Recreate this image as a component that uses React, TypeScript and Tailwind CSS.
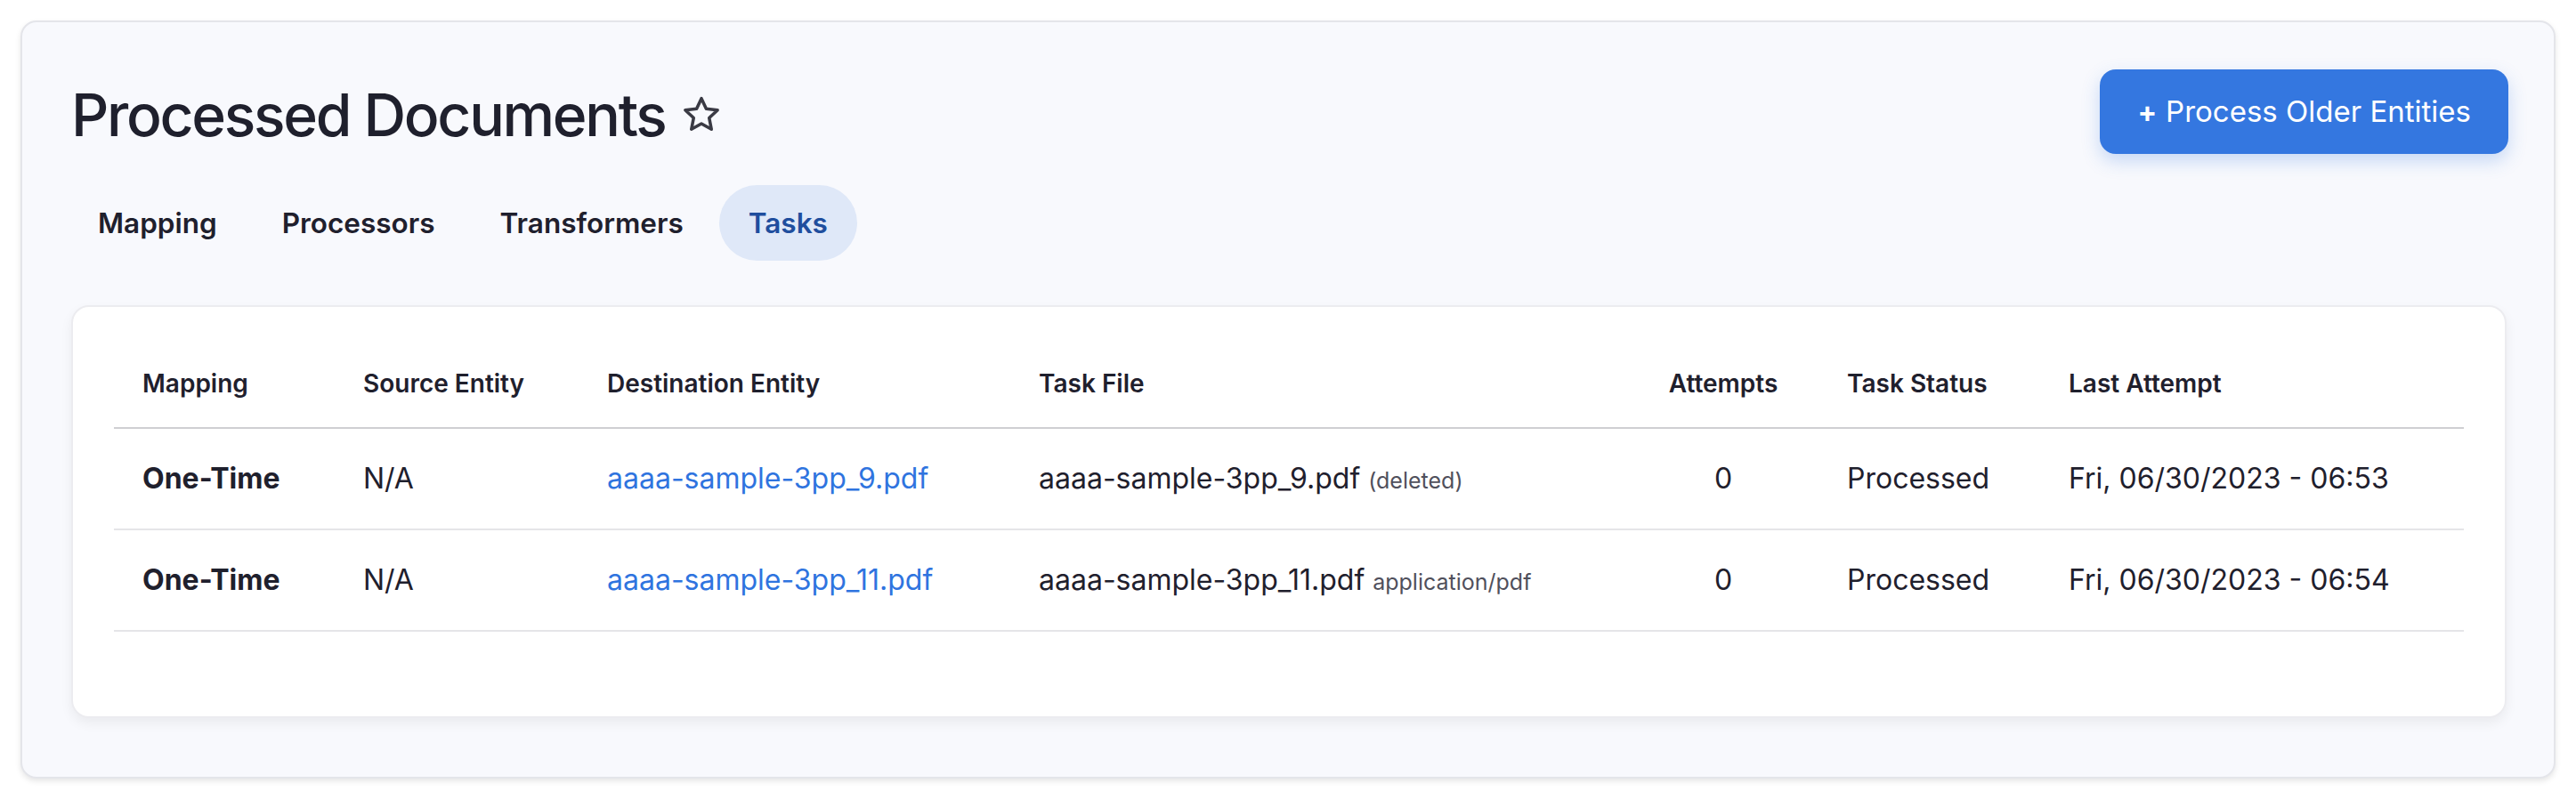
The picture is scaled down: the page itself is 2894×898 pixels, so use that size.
import React from "react";

const font = { fontFamily: "Inter, 'Noto Sans', sans-serif" };

function Star() {
  return (
    <svg width="52" height="50" viewBox="0 0 24 24" fill="none" stroke="#3a3a44" strokeWidth="1.7" strokeLinejoin="round">
      <path d="M12 3.2l2.6 5.6 6.1.7-4.5 4.2 1.2 6.1L12 16.8l-5.4 3 1.2-6.1-4.5-4.2 6.1-.7z" />
    </svg>
  );
}

const rows = [
  { file: "aaaa-sample-3pp_9.pdf", note: "(deleted)", date: "Fri, 06/30/2023 - 06:53" },
  { file: "aaaa-sample-3pp_11.pdf", note: "application/pdf", date: "Fri, 06/30/2023 - 06:54" },
];

export default function App() {
  return (
    <div className="w-[2894px] h-[898px] bg-white p-[23px]" style={font}>
      <div className="h-full rounded-[18px] border-2 border-[#e4e5ea] bg-[#f8f9fd] shadow-[0_3px_6px_rgba(0,0,0,0.10)] pl-[55px] pr-[53px] pt-[53px]">
        <div className="flex items-start justify-between">
          <div className="flex items-center gap-[14px] pt-[13px]">
            <h1 className="text-[66px] leading-[76px] font-medium tracking-[-0.035em] text-[#1f202d]">Processed Documents</h1>
            <Star />
          </div>
          <button className="-mr-[2px] h-[95px] rounded-[18px] bg-[#3477e0] px-[42px] text-[33px] font-normal text-white shadow-[0_8px_20px_rgba(52,119,224,0.25)] flex items-center gap-[10px]">
            <span className="font-bold text-[32px] leading-none">+</span>
            <span>Process Older Entities</span>
          </button>
        </div>
        <div className="mt-[35px] -ml-[3px] flex gap-[7px]">
          {["Mapping", "Processors", "Transformers", "Tasks"].map((t) => (
            <div
              key={t}
              className={
                t === "Tasks"
                  ? "h-[85px] px-[33px] rounded-full bg-[#dfe8f8] text-[#1f4e9e] text-[31.5px] font-semibold flex items-center"
                  : "h-[85px] px-[33px] rounded-full text-[#1f202d] text-[31.5px] font-semibold flex items-center"
              }
            >
              {t}
            </div>
          ))}
        </div>
        <div className="mt-[50px] rounded-[20px] border-2 border-[#ececf0] bg-white shadow-[0_6px_14px_rgba(0,0,0,0.06)] px-[46px] pt-[36px] pb-[95px]">
          <table className="w-full table-fixed border-collapse text-[#1f202d]">
            <colgroup>
              <col className="w-[248px]" />
              <col className="w-[274px]" />
              <col className="w-[485px]" />
              <col className="w-[694px]" />
              <col className="w-[214px]" />
              <col className="w-[249px]" />
              <col className="w-[476px]" />
            </colgroup>
            <thead>
              <tr className="h-[100px] border-b-2 border-[#cfcfd2] text-[28px] font-semibold">
                <th className="px-[32px] text-left font-semibold">Mapping</th>
                <th className="px-[32px] text-left font-semibold">Source Entity</th>
                <th className="px-[32px] text-left font-semibold">Destination Entity</th>
                <th className="px-[32px] text-left font-semibold">Task File</th>
                <th className="px-[32px] text-center font-semibold">Attempts</th>
                <th className="px-[32px] text-left font-semibold">Task Status</th>
                <th className="px-[32px] text-left font-semibold">Last Attempt</th>
              </tr>
            </thead>
            <tbody className="text-[32px]">
              {rows.map((r) => (
                <tr key={r.file} className="h-[114px] border-b-2 border-[#e5e5e8]">
                  <td className="px-[32px] font-bold">One-Time</td>
                  <td className="px-[32px]">N/A</td>
                  <td className="px-[32px] text-[#2f74df]">{r.file}</td>
                  <td className="px-[32px] whitespace-nowrap">
                    {r.file} <span className="text-[25px] text-[#50505c]">{r.note}</span>
                  </td>
                  <td className="px-[32px] text-center">0</td>
                  <td className="px-[32px]">Processed</td>
                  <td className="px-[32px] whitespace-nowrap">{r.date}</td>
                </tr>
              ))}
            </tbody>
          </table>
        </div>
      </div>
    </div>
  );
}
